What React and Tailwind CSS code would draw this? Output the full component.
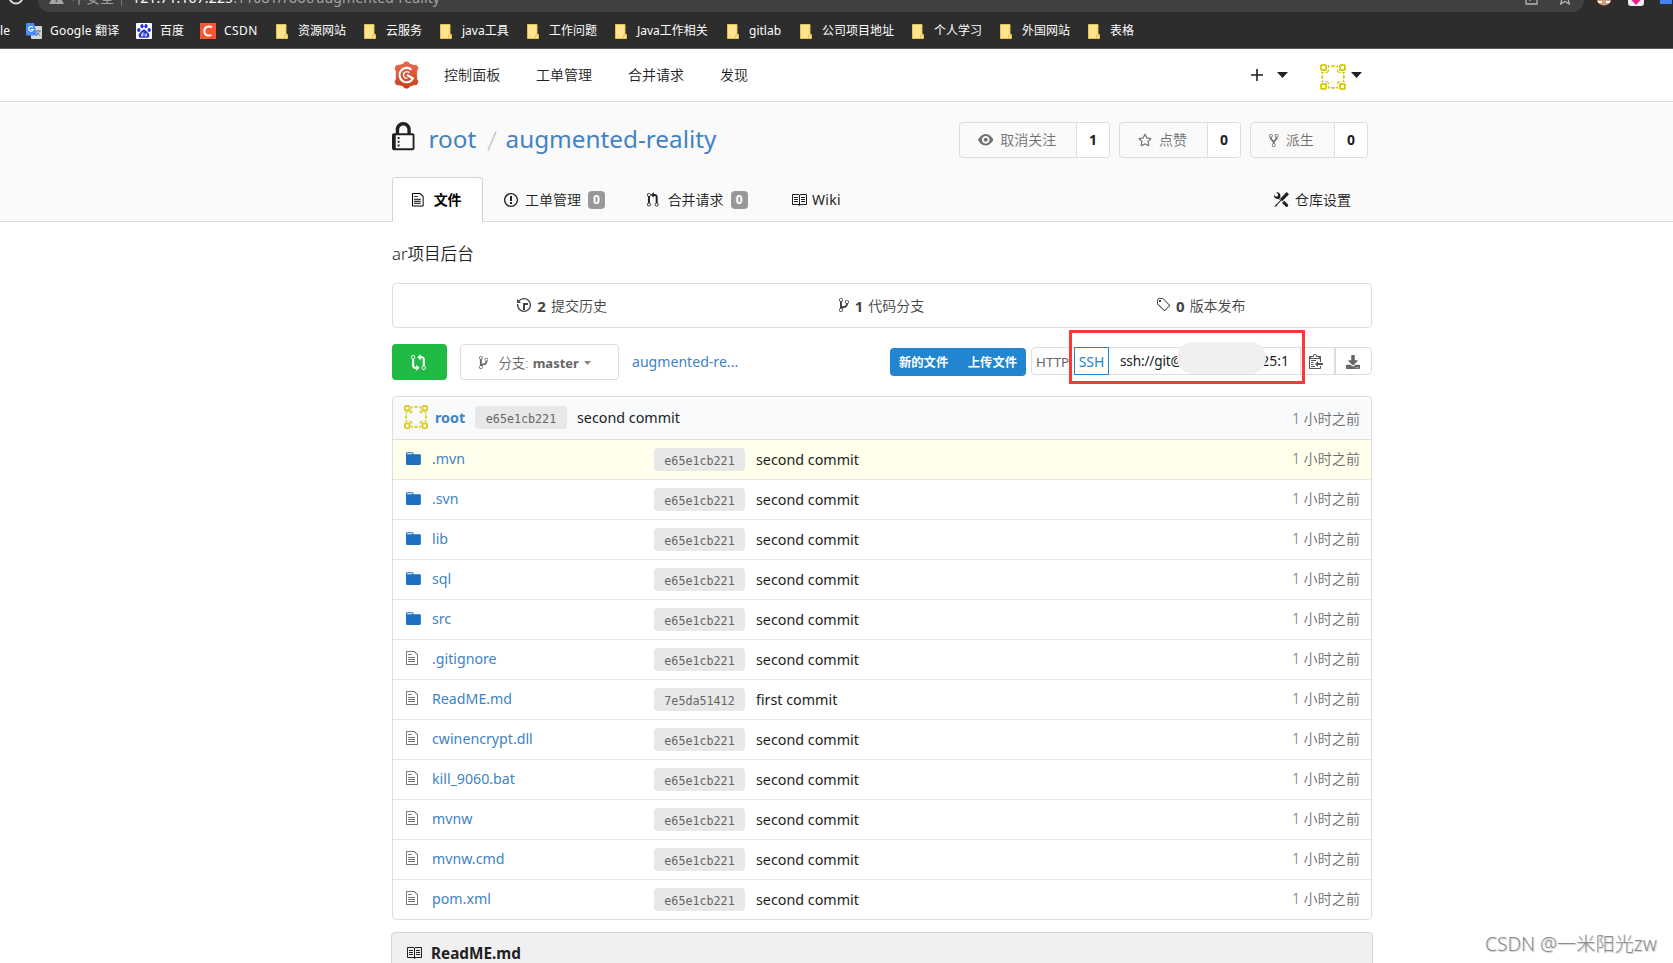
import React from "react";
import { FaRegStar, FaDownload } from "react-icons/fa";

const PATHS = {
  fileText: [12, "M6 5H2V4h4v1zM2 8h7V7H2v1zm0 2h7V9H2v1zm0 2h7v-1H2v1zm10-7.5V14c0 .55-.45 1-1 1H1c-.55 0-1-.45-1-1V2c0-.55.45-1 1-1h7.5L12 4.5zM11 5L8 2H1v12h10V5z"],
  issue: [14, "M7 2.3c3.14 0 5.7 2.56 5.7 5.7s-2.56 5.7-5.7 5.7A5.71 5.71 0 0 1 1.3 8c0-3.14 2.56-5.7 5.7-5.7zM7 1C3.14 1 0 4.14 0 8s3.14 7 7 7 7-3.14 7-7-3.14-7-7-7zm1 3H6v5h2V4zm0 6H6v2h2v-2z"],
  pull: [12, "M11 11.28V5c-.03-.78-.34-1.47-.94-2.06C9.46 2.35 8.78 2.03 8 2H7V0L4 3l3 3V4h1c.27.02.48.11.69.31.21.2.3.42.31.69v6.28A1.993 1.993 0 0 0 10 15a1.993 1.993 0 0 0 1-3.72zm-1 2.92c-.66 0-1.2-.55-1.2-1.2 0-.65.55-1.2 1.2-1.2.65 0 1.2.55 1.2 1.2 0 .65-.55 1.2-1.2 1.2zM4 3c0-1.11-.89-2-2-2a1.993 1.993 0 0 0-1 3.72v6.56A1.993 1.993 0 0 0 2 15a1.993 1.993 0 0 0 1-3.72V4.72c.59-.34 1-.98 1-1.72zm-.8 10c0 .66-.55 1.2-1.2 1.2-.65 0-1.2-.55-1.2-1.2 0-.65.55-1.2 1.2-1.2.65 0 1.2.55 1.2 1.2zM2 4.2C1.34 4.2.8 3.65.8 3c0-.65.55-1.2 1.2-1.2.65 0 1.2.55 1.2 1.2 0 .65-.55 1.2-1.2 1.2z"],
  book: [16, "M3 5h4v1H3V5zm0 3h4V7H3v1zm0 2h4V9H3v1zm11-5h-4v1h4V5zm0 2h-4v1h4V7zm0 2h-4v1h4V9zm2-6v9c0 .55-.45 1-1 1H9.5l-1 1-1-1H2c-.55 0-1-.45-1-1V3c0-.55.45-1 1-1h5.5l1 1 1-1H15c.55 0 1 .45 1 1zm-8 .5L7.5 3H2v9h6V3.5zm7-.5H9.5l-.5.5V12h6V3z"],
  eye: [16, "M8.06 2C3 2 0 8 0 8s3 6 8.06 6C13 14 16 8 16 8s-3-6-7.94-6zM8 12c-2.2 0-4-1.78-4-4 0-2.2 1.8-4 4-4 2.22 0 4 1.8 4 4 0 2.22-1.78 4-4 4zm2-4c0 1.11-.89 2-2 2-1.11 0-2-.89-2-2 0-1.11.89-2 2-2 1.11 0 2 .89 2 2z"],
  fork: [10, "M8 1a1.993 1.993 0 0 0-1 3.72V6L5 8 3 6V4.72A1.993 1.993 0 0 0 2 1a1.993 1.993 0 0 0-1 3.72V6.5l3 3v1.78A1.993 1.993 0 0 0 5 15a1.993 1.993 0 0 0 1-3.72V9.5l3-3V4.72A1.993 1.993 0 0 0 8 1zM2 4.2C1.34 4.2.8 3.65.8 3c0-.65.55-1.2 1.2-1.2.65 0 1.2.55 1.2 1.2 0 .65-.55 1.2-1.2 1.2zm3 10c-.66 0-1.2-.55-1.2-1.2 0-.65.55-1.2 1.2-1.2.65 0 1.2.55 1.2 1.2 0 .65-.55 1.2-1.2 1.2zm3-10c-.66 0-1.2-.55-1.2-1.2 0-.65.55-1.2 1.2-1.2.65 0 1.2.55 1.2 1.2 0 .65-.55 1.2-1.2 1.2z"],
  tools: [16, "M4.48 7.27c.26.26 1.28 1.33 1.28 1.33l.56-.58-.88-.91 1.69-1.8s-.76-.74-.43-.45c.32-1.19.03-2.51-.87-3.44C4.93.5 3.66.2 2.52.51l1.93 2-.51 1.96-1.89.52-1.93-1.99C-.19 4.17.1 5.48 1 6.4c.94.98 2.29 1.26 3.48.87zm6.44 1.94l-2.33 2.3 3.84 3.98c.31.33.73.49 1.14.49.41 0 .82-.16 1.14-.49.63-.65.63-1.7 0-2.35l-3.79-3.93zM16 2.53L13.55 0 6.33 7.46l.88.91-4.31 4.46-.99.53-1.39 2.27.35.37 2.2-1.44.51-1.02L7.9 9.08l.88.91L16 2.53z"],
  history: [14, "M8 13H6V6h5v2H8v5zM7 1C4.81 1 2.87 2.02 1.59 3.59L0 2v4h4L2.5 4.5C3.55 3.17 5.17 2.3 7 2.3c3.14 0 5.7 2.56 5.7 5.7s-2.56 5.7-5.7 5.7A5.71 5.71 0 0 1 1.3 8c0-.34.03-.67.09-1H.08C.03 7.33 0 7.66 0 8c0 3.86 3.14 7 7 7s7-3.14 7-7-3.14-7-7-7z"],
  branch: [10, "M10 5c0-1.11-.89-2-2-2a1.993 1.993 0 0 0-1 3.72v.3c-.02.52-.23.98-.63 1.38-.4.4-.86.61-1.38.63-.83.02-1.48.16-2 .45V4.72a1.993 1.993 0 0 0-1-3.72C.88 1 0 1.89 0 3a2 2 0 0 0 1 1.72v6.56c-.59.35-1 .99-1 1.72 0 1.11.89 2 2 2 1.11 0 2-.89 2-2 0-.53-.2-1-.53-1.36.09-.06.48-.41.59-.47.25-.11.56-.17.94-.17 1.05-.05 1.95-.45 2.75-1.25S8.95 7.77 9 6.73h-.02C9.59 6.37 10 5.73 10 5zM2 1.8c.66 0 1.2.55 1.2 1.2 0 .65-.55 1.2-1.2 1.2C1.35 4.2.8 3.65.8 3c0-.65.55-1.2 1.2-1.2zm0 12.41c-.66 0-1.2-.55-1.2-1.2 0-.65.55-1.2 1.2-1.2.65 0 1.2.55 1.2 1.2 0 .65-.55 1.2-1.2 1.2zm6-8c-.66 0-1.2-.55-1.2-1.2 0-.65.55-1.2 1.2-1.2.65 0 1.2.55 1.2 1.2 0 .65-.55 1.2-1.2 1.2z"],
  compare: [14, "M5 12H4c-.27-.02-.48-.11-.69-.31-.21-.2-.3-.42-.31-.69V4.72A1.993 1.993 0 0 0 2 1a1.993 1.993 0 0 0-1 3.72V11c.03.78.34 1.47.94 2.06.6.59 1.28.91 2.06.94h1v2l3-3-3-3v2zM2 1.8c.66 0 1.2.55 1.2 1.2 0 .65-.55 1.2-1.2 1.2C1.35 4.2.8 3.65.8 3c0-.65.55-1.2 1.2-1.2zm11 9.48V5c-.03-.78-.34-1.47-.94-2.06-.6-.59-1.28-.91-2.06-.94H9V0L6 3l3 3V4h1c.27.02.48.11.69.31.21.2.3.42.31.69v6.28A1.993 1.993 0 0 0 12 15a1.993 1.993 0 0 0 1-3.72zm-1 2.92c-.66 0-1.2-.55-1.2-1.2 0-.65.55-1.2 1.2-1.2.65 0 1.2.55 1.2 1.2 0 .65-.55 1.2-1.2 1.2z"],
  tag: [14, "M7.685 1.72a2.49 2.49 0 0 0-1.76-.726H3.48A2.5 2.5 0 0 0 .994 3.48v2.456c0 .656.269 1.292.726 1.76l6.024 6.024a.99.99 0 0 0 1.402 0l4.563-4.563a.99.99 0 0 0 0-1.402L7.685 1.72zM2.366 7.048A1.54 1.54 0 0 1 1.9 5.925V3.48c0-.874.716-1.58 1.58-1.58h2.456c.418 0 .825.159 1.123.467l6.104 6.094-4.702 4.702-6.094-6.114zm.626-4.066h1.989v1.989H2.982V2.982h.01z"],
  clippy: [14, "M2 13h4v1H2v-1zm5-6H2v1h5V7zm2 3V8l-3 3 3 3v-2h5v-2H9zM4.500 9H2v1h2.500V9zM2 12h2.500v-1H2v1zm9 1h1v2c-.02.28-.11.52-.3.7-.19.18-.42.28-.7.3H1c-.55 0-1-.45-1-1V4c0-.55.45-1 1-1h3c0-1.11.89-2 2-2 1.110 0 2 .89 2 2h3c.55 0 1 .45 1 1v5h-1V6H1v9h10v-2zM2 5h8c0-.55-.45-1-1-1H8c-.55 0-1-.45-1-1s-.45-1-1-1-1 .45-1 1-.45 1-1 1H3c-.55 0-1 .45-1 1z"],
  folder: [14, "M13 4H7V3c0-.66-.31-1-1-1H1c-.55 0-1 .45-1 1v10c0 .55.45 1 1 1h12c.55 0 1-.45 1-1V5c0-.55-.45-1-1-1zM6 4H1V3h5v1z"],
  lock: [12, "M4 13H3v-1h1v1zm8-6v7c0 .55-.45 1-1 1H1c-.55 0-1-.45-1-1V7c0-.55.45-1 1-1h1V4c0-2.200 1.800-4 4-4s4 1.800 4 4v2h1c.55 0 1 .45 1 1zM3.800 6h4.410V4c0-1.220-.98-2.200-2.200-2.200-1.220 0-2.200.98-2.200 2.200v2H3.800zM11 7H2v7h9V7zM4 8H3v1h1V8zm0 2H3v1h1v-1z"],
};

function Icon({ name, size = 15, className = "" }) {
  const [w, d] = PATHS[name];
  return (
    <svg className={`shrink-0 ${className}`} width={(w * size) / 16} height={size} viewBox={`0 0 ${w} 16`} fill="currentColor">
      <path d={d} />
    </svg>
  );
}

function Caret({ w = 11, h = 6, className = "" }) {
  return (
    <svg className={`shrink-0 ${className}`} width={w} height={h} viewBox="0 0 10 5" preserveAspectRatio="none" fill="currentColor">
      <path d="M0 0h10L5 5z" />
    </svg>
  );
}

function Avatar({ size = 26, className = "" }) {
  const corner = "M1 0h5v1h1v6H1V6H0V1h1zM2 2v3h3V2z";
  const edge = "M8 1h1v1h1v1H9v1H8zM10.500 3 12 1h2l1.500 2zM18 1h-1v1h-1v1h1v1h1zM8 5.500h1v2.500h-2v-1h1zM18 5.500h-1v2.500h2v-1h-1z";
  return (
    <svg className={`shrink-0 ${className}`} width={size} height={size} viewBox="0 0 26 26" fill="#d8ce1c">
      {[0, 90, 180, 270].map((a) => (
        <g key={a} transform={`rotate(${a} 13 13)`}>
          <path d={corner} fillRule="evenodd" />
          <path d={edge} />
        </g>
      ))}
    </svg>
  );
}

function Logo() {
  return (
    <svg className="shrink-0" width="25" height="28" viewBox="0 0 25 28">
      <defs>
        <linearGradient id="lg" gradientUnits="userSpaceOnUse" x1="0" y1="1" x2="0" y2="27">
          <stop offset="0" stopColor="#ea6a4e" />
          <stop offset="1" stopColor="#c8401f" />
        </linearGradient>
      </defs>
      <path
        d="M11 1h3l2 2.300 3 .9 3.500.3 1.500 2.600-1.300 3V18l1.300 3-1.500 2.600-3.500.3-3 .9L14 27h-3l-2-2.200-3-.9-3.500-.3L1 21l1.300-3v-7.900L1 7.100l1.500-2.600L6 4.200l3-.9z"
        fill="url(#lg)"
        stroke="url(#lg)"
        strokeLinejoin="round"
      />
      <path d="M17.500 8.700A7.200 7.200 0 1 0 19 17.500L13 14" fill="none" stroke="#fff" strokeWidth="2.100" />
      <path d="M15.300 11.800A3.300 3.300 0 1 0 13.500 17.200" fill="none" stroke="#fff" strokeWidth="1.300" />
    </svg>
  );
}

function BookmarkFolder() {
  return (
    <svg className="shrink-0" width="12" height="15" viewBox="0 0 12 15">
      <path d="M.5.5h9.500v10h1.500v4H.5z" fill="#ffe391" stroke="#e8c34a" />
      <path d="M8.500 14.500v-3h2" fill="none" stroke="#e8c34a" />
    </svg>
  );
}

const folders = [
  ["资源网站", "w-[88px]"],
  ["云服务", "w-[76px]"],
  ["java工具", "w-[87px]"],
  ["工作问题", "w-[88px]"],
  ["Java工作相关", "w-[112px]"],
  ["gitlab", "w-[73px]"],
  ["公司项目地址", "w-[112px]"],
  ["个人学习", "w-[88px]"],
  ["外国网站", "w-[88px]"],
  ["表格", "w-[60px]"],
];

function Browser() {
  return (
    <div className="h-[49px] shrink-0 overflow-hidden border-b border-[#5c5959] bg-[#2d2d2d] text-white">
      <div className="flex h-3 items-start">
        <svg className="-mt-[11px] ml-2 shrink-0" width="16" height="16" viewBox="0 0 16 16">
          <circle cx="8" cy="8" r="6.500" fill="none" stroke="#dadada" strokeWidth="2" />
        </svg>
        <div className="ml-[14px] flex h-3 w-[1546px] items-start rounded-b-[14px] bg-[#404040]">
          <svg className="-mt-[10px] ml-[11px] shrink-0" width="15" height="14" viewBox="0 0 15 14">
            <path d="M7.500 0 15 14H0zM6.700 9h1.600V5H6.700zm0 3h1.600v-1.600H6.700z" fill="#a5a5a5" fillRule="evenodd" />
          </svg>
          <span className="-mt-[12px] ml-2 text-[14px] leading-5 text-[#a0a0a0]">不安全</span>
          <span className="ml-[7px] h-[6px] w-px bg-[#777]" />
          <span className="-mt-[12px] ml-[10px] text-[14px] leading-5 tracking-[0.13px] whitespace-nowrap text-[#a5a5a5]">
            <span className="text-white">121.71.167.225</span>:11081/root/augmented-reality
          </span>
          <svg className="-mt-[8px] mr-5 ml-auto shrink-0" width="13" height="13" viewBox="0 0 13 13" fill="none" stroke="#b5b5b5" strokeWidth="1.300">
            <path d="M1 1v11h11V7M5 9c0-4 3-5 6-5" />
          </svg>
          <svg className="-mt-[10px] mr-3 shrink-0" width="14" height="15" viewBox="0 0 14 15" fill="none" stroke="#b5b5b5" strokeWidth="1.300">
            <path d="M7 1l2 4.500 4.500.5-3.300 3.200 1 4.800L7 11.500 2.800 14l1-4.800L.500 6 5 5.500z" />
          </svg>
        </div>
        <svg className="-mt-[9px] ml-[12px] shrink-0" width="16" height="15" viewBox="0 0 16 15">
          <circle cx="8" cy="7" r="7.500" fill="#d99a76" />
          <path d="M2 10h4v2H2zM10 10h4v2h-4z" fill="#fff" />
        </svg>
        <svg className="-mt-[10px] ml-4 shrink-0" width="16" height="16" viewBox="0 0 16 16">
          <rect width="16" height="16" rx="3" fill="#f1f1f1" />
          <path d="M2.500 9h11L8 15z" fill="#ee1c8c" />
        </svg>
        <div className="-mt-[9px] ml-4 h-[13px] w-3 shrink-0 bg-[#4285f4]" />
      </div>
      <div className="flex h-9 items-center pt-[2px] text-[12px] leading-4 whitespace-nowrap">
        <span className="w-[26px] shrink-0 tracking-[0.2px]">le</span>
        <div className="flex w-[110px] shrink-0 items-center gap-2">
          <svg width="16" height="16" viewBox="0 0 16 16" className="shrink-0">
            <rect x="5" y="3" width="11" height="13" rx="1" fill="#d5d8dc" />
            <path d="M9 8h6M12 7v1M10 13l4-5M10.500 9.500l4 3.500" stroke="#6b7885" fill="none" />
            <path d="M1 0h7l3 12.500H1a1 1 0 0 1-1-1V1a1 1 0 0 1 1-1z" fill="#4b8bf5" />
            <path d="M7 4.500A2.300 2.300 0 1 0 7.300 6.500H5" fill="none" stroke="#fff" strokeWidth="1.100" />
          </svg>
          <span className="tracking-[0.2px]">Google 翻译</span>
        </div>
        <div className="flex w-16 shrink-0 items-center gap-2">
          <svg width="16" height="16" viewBox="0 0 16 16" className="shrink-0">
            <rect width="16" height="16" rx="1" fill="#fff" />
            <g fill="#2932e1">
              <ellipse cx="2.800" cy="7" rx="1.700" ry="2" />
              <ellipse cx="6" cy="3.200" rx="1.600" ry="2.100" />
              <ellipse cx="10" cy="3.200" rx="1.600" ry="2.100" />
              <ellipse cx="13.200" cy="7" rx="1.700" ry="2" />
              <path d="M8 6.500c2 0 2.500 2 4 3.200 2.500 2 1.500 5-1 5.100-2 .1-4-.2-6 0-2.500 0-3.500-3-1-5.100C5.500 8.500 6 6.500 8 6.500z" />
            </g>
            <path d="M7 9v4H5.500v-2H7M9 10.500V13h1.500v-2.500" fill="none" stroke="#fff" strokeWidth=".8" />
          </svg>
          <span>百度</span>
        </div>
        <div className="flex w-[76px] shrink-0 items-center gap-2">
          <svg width="16" height="16" viewBox="0 0 16 16" className="shrink-0">
            <rect width="16" height="16" fill="#fc5531" />
            <path d="M12 4.300C9 2.500 4.500 3.500 4.300 8c0 4.200 4 5.300 7 3.900" fill="none" stroke="#fff" strokeWidth="2" />
          </svg>
          <span className="tracking-[0.4px]">CSDN</span>
        </div>
        {folders.map(([label, w]) => (
          <div key={label} className={`flex shrink-0 items-center gap-[10px] ${w}`}>
            <BookmarkFolder />
            <span>{label}</span>
          </div>
        ))}
      </div>
    </div>
  );
}

function CountButton({ icon, label, count, w, cw }) {
  return (
    <div className={`flex h-9 rounded-[4px] border border-[#dedede] text-[14px] ${w}`}>
      <div className="flex flex-1 items-center justify-center gap-[7px] pr-[2px] text-[#707070]">
        {icon}
        <span className="font-[350]">{label}</span>
      </div>
      <div className={`flex items-center justify-center rounded-r-[3px] border-l border-[#dedede] bg-white font-bold text-[#1d1d1d] ${cw}`}>{count}</div>
    </div>
  );
}

function Badge() {
  return <span className="flex h-[18px] w-[17px] items-center justify-center rounded-[4px] bg-[#999] text-[12px] font-bold text-white">0</span>;
}

function Sha({ children, className = "w-[91px]" }) {
  return (
    <span className={`flex h-[23px] shrink-0 items-center justify-center rounded-[4px] bg-[#e8e8e8] pt-[3px] font-['DejaVu_Sans_Mono',monospace] text-[11.7px] text-[#666] ${className}`}>
      {children}
    </span>
  );
}

const files = [
  [".mvn", true], [".svn", true], ["lib", true], ["sql", true], ["src", true],
  [".gitignore"], ["ReadME.md"], ["cwinencrypt.dll"], ["kill_9060.bat"], ["mvnw"], ["mvnw.cmd"], ["pom.xml"],
];

export default function App() {
  return (
    <div className="relative flex h-[963px] w-[1673px] flex-col overflow-hidden bg-white font-['Noto_Sans','Noto_Sans_CJK_SC',sans-serif] text-[14px] leading-5 text-[#212121]">
      <Browser />

      <nav className="flex h-[53px] shrink-0 items-center border-b border-[#dddddd] pl-[394px] font-[350]">
        <Logo />
        <span className="ml-[25px] w-[92px] tracking-[0.1px]">控制面板</span>
        <span className="w-[92px]">工单管理</span>
        <span className="w-[92px]">合并请求</span>
        <span className="w-[531px]">发现</span>
        <svg width="12" height="12" viewBox="0 0 12 12" className="shrink-0"><path d="M5.200 0h1.600v5.200H12v1.600H6.800V12H5.200V6.800H0V5.200h5.200z" fill="#212121" /></svg>
        <Caret className="ml-[14px]" />
        <Avatar className="mt-[3px] ml-8" />
        <Caret className="ml-[5px]" />
      </nav>

      <section className="h-[120px] shrink-0 border-b border-[#dddddd] bg-[#fafafa] px-[392px]">
        <div className="flex h-[75px] w-[980px] pt-5">
          <Icon name="lock" size={30} />
          <div className="-mt-px ml-[14px] flex h-[36px] items-center text-[24.300px] text-[#4183c4]">
            <span className="w-[58px]">root</span>
            <svg width="10" height="20" viewBox="0 0 10 20" className="mt-1 mr-[9px] shrink-0"><path d="M9 .5 1 19.500" stroke="#c4c4c4" strokeWidth="1.500" /></svg>
            <span className="whitespace-nowrap">augmented-reality</span>
          </div>
          <div className="mr-1 ml-auto flex gap-[9px]">
            <CountButton icon={<Icon name="eye" size={15.500} />} label="取消关注" count="1" w="w-[151px]" cw="w-[33px]" />
            <CountButton icon={<FaRegStar className="text-[14px]" />} label="点赞" count="0" w="w-[122px]" cw="w-[33px]" />
            <CountButton icon={<Icon name="fork" />} label="派生" count="0" w="w-[118px]" cw="w-[33px]" />
          </div>
        </div>
        <div className="flex h-[45px] w-[980px] items-center">
          <div className="flex h-[45px] w-[91px] items-center gap-[10px] rounded-t-[4px] border border-b-0 border-[#d4d4d5] bg-white pl-[19px] font-bold text-black">
            <Icon name="fileText" size={15.500} />
            <span>文件</span>
          </div>
          <div className="ml-[21px] flex w-[143px] items-center">
            <Icon name="issue" size={16} />
            <span className="mr-[7px] ml-[7px] font-[350]">工单管理</span>
            <Badge />
          </div>
          <div className="flex w-[144px] items-center">
            <Icon name="pull" size={15.500} />
            <span className="mr-[7px] ml-[9px] font-[350]">合并请求</span>
            <Badge />
          </div>
          <div className="flex items-center gap-[5px]">
            <Icon name="book" size={16} />
            <span className="tracking-[0.3px]">Wiki</span>
          </div>
          <div className="mr-[21px] ml-auto flex items-center gap-[6px]">
            <Icon name="tools" />
            <span className="font-[350]">仓库设置</span>
          </div>
        </div>
      </section>

      <main className="flex flex-col px-[392px]">
        <p className="mt-5 text-[16.600px] leading-6 font-[350]">ar项目后台</p>

        <div className="mt-[17px] grid h-[45px] w-[980px] grid-cols-3 items-center rounded-[4px] border border-[#dedede] px-[10px] pb-px text-[#444]">
          {[["history", "2", "提交历史"], ["branch", "1", "代码分支"], ["tag", "0", "版本发布"]].map(([ic, n, label]) => (
            <div key={ic} className="-ml-px flex items-center justify-center gap-[5px]">
              <Icon name={ic} size={16} className="mr-px" />
              <span className="pt-px text-[15px] font-bold">{n}</span>
              <span className="pt-px font-[350]">{label}</span>
            </div>
          ))}
        </div>

        <div className="relative mt-4 flex h-9 w-[980px] items-center">
          <div className="flex h-9 w-[55px] items-center justify-center rounded-[4px] bg-[#21ba45] pr-[2px] text-white">
            <Icon name="compare" size={17} />
          </div>
          <div className="ml-[13px] flex h-9 w-[159px] items-center rounded-[4px] border border-[#dedede] pl-[18px] text-[#666]">
            <Icon name="branch" />
            <span className="mt-[2px] ml-[10px] text-[13.500px] font-[350]">分支:</span>
            <b className="mt-[2px] ml-1 text-[13px]">master</b>
            <Caret w={7} h={4} className="mt-[2px] ml-[5px] text-[#888]" />
          </div>
          <span className="ml-[13px] w-[258px] text-[14.100px] text-[#4183c4]">augmented-re...</span>
          <div className="flex h-7 w-[136px] shrink-0 items-center justify-between rounded-[4px] bg-[#2185d0] px-[9px] pt-[2px] text-[12.300px] font-bold text-white">
            <span>新的文件</span>
            <span>上传文件</span>
          </div>
          <div className="-mt-[2px] ml-[5px] flex h-7 w-[341px] shrink-0 rounded-[4px] border border-[#dedede]">
            <span className="flex w-[42px] items-center pt-[2px] pl-1 text-[13.400px] text-[#666]">HTTP</span>
            <span className="-my-px flex w-[35px] items-center justify-center border border-[#2185d0] pt-[2px] text-[#2185d0]">SSH</span>
            <span className="flex w-[192px] items-center justify-between border-r border-[#dedede] pr-[11px] pl-[11px]">
              <span className="text-[13.600px] tracking-[-0.15px]">ssh://git@</span>
              <span>25:1</span>
            </span>
            <span className="flex w-[33px] items-center justify-center pr-[3px] text-[#555]"><Icon name="clippy" size={16} /></span>
            <span className="flex flex-1 items-center justify-center border-l-2 border-[#dedede] pt-px pr-px text-[#666]"><FaDownload className="text-[14px]" /></span>
          </div>
          <div className="absolute top-[-2px] left-[785px] h-8 w-[89px] rounded-[16px] bg-[#f0f0f0]" />
          <div className="absolute top-[-14px] left-[677px] h-[54px] w-[236px] border-[3px] border-[#fd3737]" />
        </div>

        <div className="mt-4 w-[980px] rounded-[4px] border border-[#dedede]">
          <div className="flex h-[43px] items-center rounded-t-[4px] border-b border-[#dedede] bg-[#f8fafc] pr-[11px] pb-px pl-[11px]">
            <Avatar size={24} className="-mt-px" />
            <b className="ml-[7px] w-10 text-[14.300px] text-[#4183c4]">root</b>
            <Sha className="w-[92px]">e65e1cb221</Sha>
            <span className="ml-[10px] text-[14.300px]">second commit</span>
            <span className="mt-[3px] ml-auto text-[14.100px] font-[350] text-[#6c6c6c]">1 小时之前</span>
          </div>
          {files.map(([name, dir], i) => (
            <div
              key={name}
              className={`flex items-center border-[#e4e6e8] pr-[11px] pl-[13px] ${i === 0 ? "bg-[#ffffeb]" : ""} ${i < files.length - 1 ? "h-10 border-b" : "h-[39px]"}`}
            >
              <span className="-mt-[3px] w-[26px]">
                {dir ? <Icon name="folder" size={17} className="text-[#1e70bf]" /> : <Icon name="fileText" size={16} className="text-[#777]" />}
              </span>
              <span className="-mt-[2px] w-[222px] text-[14.200px] text-[#4183c4]">{name}</span>
              <Sha>{name === "ReadME.md" ? "7e5da51412" : "e65e1cb221"}</Sha>
              <span className="ml-[11px] text-[14.300px]">{name === "ReadME.md" ? "first commit" : "second commit"}</span>
              <span className="-mt-px ml-auto text-[14.100px] font-[350] text-[#6c6c6c]">1 小时之前</span>
            </div>
          ))}
        </div>

        <div className="mt-3 -ml-px flex h-[45px] w-[982px] shrink-0 items-center rounded-t-[4px] border border-[#d4d4d5] bg-[#f0f0f0] pl-[14px]">
          <Icon name="book" size={16} className="-mt-[4px]" />
          <b className="-mt-[4px] ml-[9px] text-[15.300px]">ReadME.md</b>
        </div>
      </main>

      <div className="absolute top-[932px] left-[1485px] text-[19.200px] leading-6 font-light whitespace-nowrap text-[#8c8c8c] [text-shadow:1px_1px_1px_#ccc]">CSDN @一米阳光zw</div>
    </div>
  );
}
